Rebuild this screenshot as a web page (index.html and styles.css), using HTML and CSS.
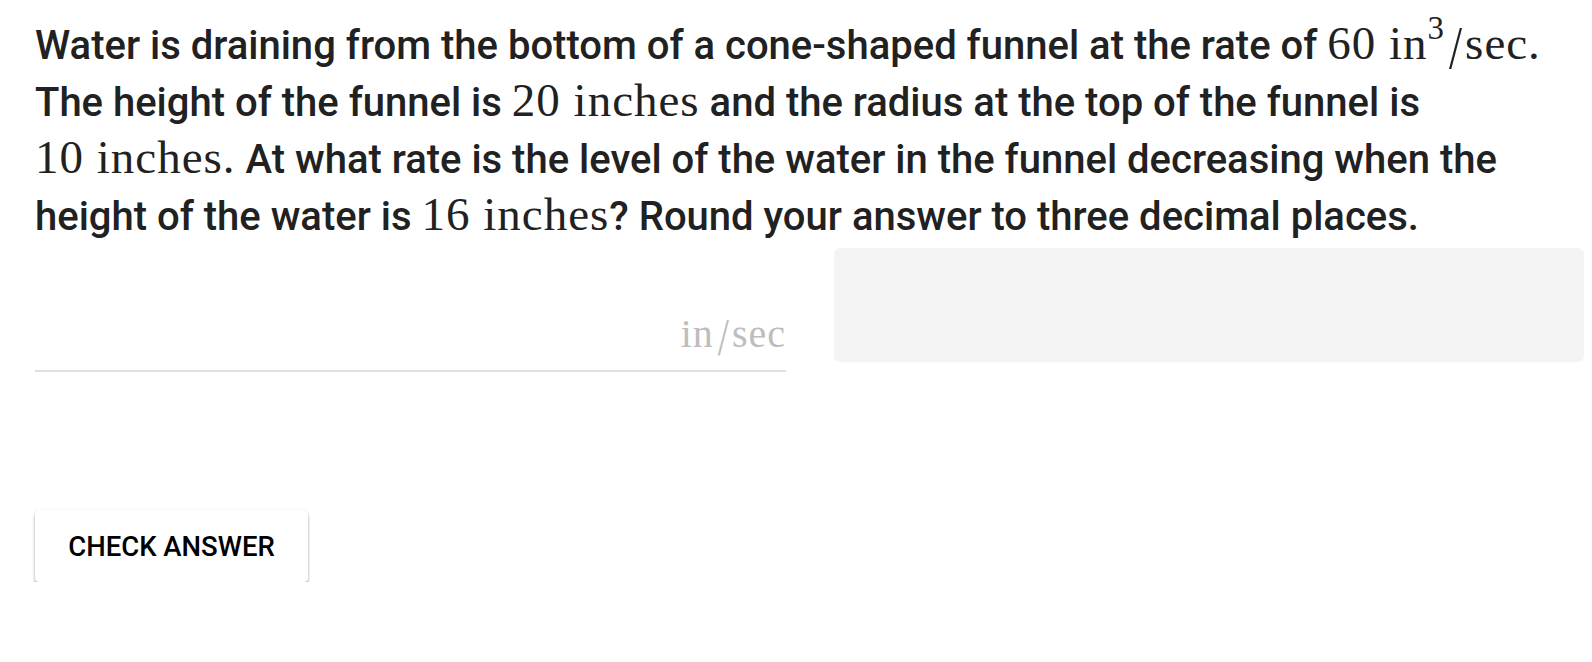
FILE: index.html
```html
<!DOCTYPE html>
<html lang="en">
<head>
<meta charset="utf-8">
<title>Question</title>
<link rel="stylesheet" href="styles.css">
</head>
<body>
<div class="page">
  <p class="question">Water is draining from the bottom of a cone-shaped funnel at the rate of <span class="math">60 in<sup>3</sup><span class="slash">/</span>sec.</span> The height of the funnel is <span class="math">20 inches</span> and the radius at the top of the funnel is <span class="math">10 inches.</span> At what rate is the level of the water in the funnel decreasing when the height of the water is <span class="math">16 inches</span>? Round your answer to three decimal places.</p>
  <div class="answer-row">
    <div class="field">
      <span class="unit">in<span class="slash">/</span>sec</span>
    </div>
    <div class="feedback"></div>
  </div>
  <button class="check">CHECK ANSWER</button>
</div>
</body>
</html>
```
FILE: styles.css
```css
html, body {
  margin: 0;
  padding: 0;
  background: #ffffff;
}
.page {
  padding: 17px 8px 0 35px;
  font-family: Roboto, "Liberation Sans", sans-serif;
}
.question {
  margin: 0;
  font-size: 40px;
  line-height: 57px;
  color: #212121;
  font-weight: 500;
}
.math {
  font-family: "Liberation Serif", serif;
  font-weight: 400;
  font-size: 47px;
  line-height: 40px;
  letter-spacing: 1px;
  white-space: nowrap;
}
.math sup {
  font-size: 0.7em;
  line-height: 0;
  vertical-align: 0.6em;
}
.slash {
  display: inline-block;
  transform: scaleY(1.3) translateY(3px);
  margin: 0 2px 0 4px;
}
.answer-row {
  display: flex;
  gap: 48px;
  margin-top: 3px;
}
.field {
  width: 751px;
  height: 124px;
  border-bottom: 2px solid #e0e0e0;
  display: flex;
  align-items: flex-end;
  justify-content: flex-end;
  box-sizing: border-box;
  padding-bottom: 14px;
}
.unit {
  font-family: "Liberation Serif", serif;
  font-size: 40px;
  line-height: 44px;
  color: #bdbdbd;
  letter-spacing: 1px;
}
.feedback {
  flex: 1;
  height: 114px;
  background: #f4f4f4;
  border-radius: 6px;
}
.check {
  display: block;
  margin-top: 138px;
  width: 273px;
  height: 72px;
  border: none;
  border-radius: 4px;
  background: #ffffff;
  box-shadow: 0 3px 3px rgba(0,0,0,0.34), 0 0 2px rgba(0,0,0,0.1);
  font-family: Roboto, "Liberation Sans", sans-serif;
  font-size: 27.5px;
  font-weight: 500;
  color: #000000;
  padding: 0;
}
```
